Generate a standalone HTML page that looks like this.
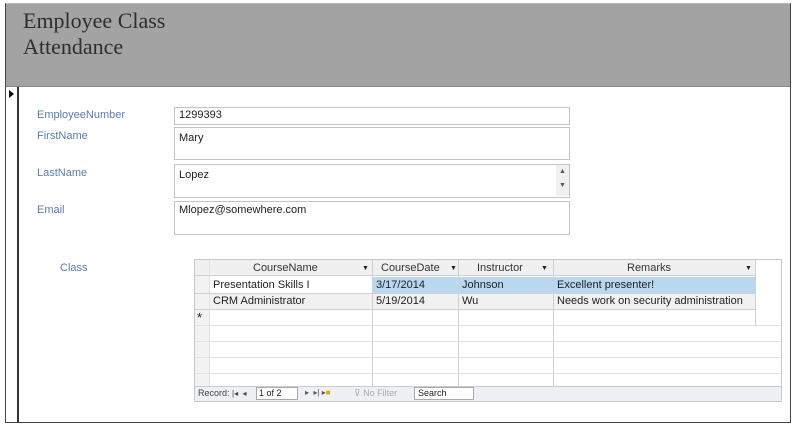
<!DOCTYPE html>
<html><head><style>
*{margin:0;padding:0;box-sizing:border-box}
body{width:795px;height:424px;background:#fff;position:relative;overflow:hidden;font-family:"Liberation Sans",sans-serif}
.a{position:absolute}
.lbl{position:absolute;font-size:11px;color:#5a7db5}
.tb{position:absolute;left:174px;width:396px;border:1.5px solid #c4c4c4;font-size:11px;color:#222;padding:1px 4px}
.g{position:absolute;font-size:11px;color:#222;white-space:nowrap}
.hl{position:absolute;height:1px;background:#e2e2e2}
.vl{position:absolute;width:1px;background:#e2e2e2}
</style></head><body>
<div class="a" style="left:5px;top:3px;width:786px;height:420px;border:1.5px solid #444;border-top-color:#bbb"></div>
<div class="a" style="left:6px;top:4px;width:784px;height:83px;background:#a3a3a3;border-bottom:1px solid #888"></div>
<div class="a" style="left:23px;top:8px;font-family:'Liberation Serif',serif;font-size:22px;line-height:26px;color:#2e2e2e">Employee Class<br>Attendance</div>
<div class="a" style="left:17px;top:87px;width:1.5px;height:336px;background:#333"></div>
<div class="a" style="left:9px;top:90px;width:0;height:0;border-left:5px solid #000;border-top:4px solid transparent;border-bottom:4px solid transparent"></div>
<div class="lbl" style="left:37px;top:109px">EmployeeNumber</div>
<div class="lbl" style="left:37px;top:130px">FirstName</div>
<div class="lbl" style="left:37px;top:167px">LastName</div>
<div class="lbl" style="left:37px;top:204px">Email</div>
<div class="lbl" style="left:60px;top:262px">Class</div>
<div class="tb" style="top:107px;height:18px">1299393</div>
<div class="tb" style="top:127px;height:33px;padding-top:4px">Mary</div>
<div class="tb" style="top:164px;height:34px;padding-top:4px">Lopez<div class="a" style="right:0;top:0;width:13px;height:31px;background:#f0f0f0;font-size:7px;color:#555;text-align:center;line-height:14px">▲<br>▼</div></div>
<div class="tb" style="top:201px;height:34px;padding-top:2px">Mlopez@somewhere.com</div>

<div class="a" style="left:194px;top:259px;width:588px;height:143px;border:1px solid #c8c8c8;background:#fff"></div>
<div class="a" style="left:195px;top:260px;width:560px;height:16px;background:#f0f0f0;border-bottom:1px solid #d0d0d0"></div>
<div class="a" style="left:195px;top:276px;width:14px;height:110px;background:#f2f2f2"></div>
<div class="a" style="left:372px;top:277px;width:383px;height:16px;background:#b9d7f0"></div>
<div class="a" style="left:209px;top:293px;width:546px;height:16px;background:#f1f1f1"></div>
<div class="vl" style="left:209px;top:260px;height:126px"></div>
<div class="vl" style="left:372px;top:260px;height:126px;background:#d0d0d0"></div>
<div class="vl" style="left:458px;top:260px;height:126px;background:#d0d0d0"></div>
<div class="vl" style="left:553px;top:260px;height:126px;background:#d0d0d0"></div>
<div class="vl" style="left:755px;top:260px;height:66px;background:#d0d0d0"></div>
<div class="hl" style="left:195px;top:293px;width:560px;background:#d0d0d0"></div>
<div class="hl" style="left:195px;top:309px;width:560px;background:#d0d0d0"></div>
<div class="hl" style="left:195px;top:325px;width:586px"></div>
<div class="hl" style="left:195px;top:341px;width:586px"></div>
<div class="hl" style="left:195px;top:357px;width:586px"></div>
<div class="hl" style="left:195px;top:373px;width:586px"></div>
<div class="g" style="left:253px;top:262px;color:#333">CourseName</div><div class="g" style="left:362px;top:265px;font-size:7px">▼</div>
<div class="g" style="left:381px;top:262px;color:#333">CourseDate</div><div class="g" style="left:450px;top:265px;font-size:7px">▼</div>
<div class="g" style="left:477px;top:262px;color:#333">Instructor</div><div class="g" style="left:541px;top:265px;font-size:7px">▼</div>
<div class="g" style="left:627px;top:262px;color:#333">Remarks</div><div class="g" style="left:745px;top:265px;font-size:7px">▼</div>
<div class="g" style="left:213px;top:279px">Presentation Skills I</div>
<div class="g" style="left:376px;top:279px">3/17/2014</div>
<div class="g" style="left:462px;top:279px">Johnson</div>
<div class="g" style="left:557px;top:279px">Excellent presenter!</div>
<div class="g" style="left:213px;top:295px">CRM Administrator</div>
<div class="g" style="left:376px;top:295px">5/19/2014</div>
<div class="g" style="left:462px;top:295px">Wu</div>
<div class="g" style="left:557px;top:295px">Needs work on security administration</div>
<div class="g" style="left:197px;top:310px;font-size:13px">*</div>
<div class="a" style="left:195px;top:386px;width:586px;height:15px;background:#eef0f3;border-top:1px solid #ccc"></div>
<div class="g" style="left:198px;top:388px;font-size:9px;color:#444">Record: <span style="font-size:8px">|◂ &nbsp;◂</span></div>
<div class="a" style="left:256px;top:387px;width:42px;height:13px;background:#fff;border:1px solid #aaa;font-size:9px;padding-left:2px;color:#222">1 of 2</div>
<div class="g" style="left:305px;top:388px;font-size:8px;color:#555">▸ &nbsp;▸| ▸<span style="color:#d9b000">■</span></div>
<div class="g" style="left:354px;top:388px;font-size:9px;color:#aaa">⊽ No Filter</div>
<div class="a" style="left:414px;top:387px;width:60px;height:13px;background:#fff;border:1px solid #aaa;font-size:9px;padding-left:3px;color:#222">Search</div>
</body></html>
